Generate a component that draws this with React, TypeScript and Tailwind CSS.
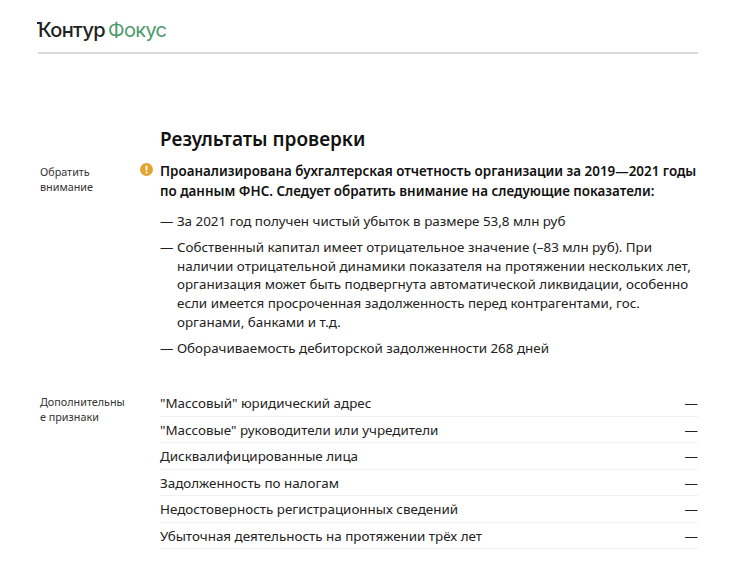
import React from 'react'

const signs = [
  '"Массовый" юридический адрес',
  '"Массовые" руководители или учредители',
  'Дисквалифицированные лица',
  'Задолженность по налогам',
  'Недостоверность регистрационных сведений',
  'Убыточная деятельность на протяжении трёх лет',
]

const notes = [
  'За 2021 год получен чистый убыток в размере 53,8 млн руб',
  'Собственный капитал имеет отрицательное значение (–83 млн руб). При наличии отрицательной динамики показателя на протяжении нескольких лет, организация может быть подвергнута автоматической ликвидации, особенно если имеется просроченная задолженность перед контрагентами, гос. органами, банками и т.д.',
  'Оборачиваемость дебиторской задолженности 268 дней',
]

export default function App() {
  return (
    <div className="w-[742px] h-[568px] overflow-hidden bg-white text-[#222] font-['Noto_Sans',sans-serif]">
      <div className="ml-[38px] w-[660px]">
        <header className="h-[54px] border-b-2 border-[#d9d9d9] pt-[18px] flex items-start text-[20px] leading-[24px] font-['Inter',sans-serif] tracking-[-0.65px]">
          <span className="relative font-medium text-[#222]">
            <span className="absolute left-[-1px] top-[4px] w-[3px] h-[2px] bg-[#222]" />
            Контур
          </span>
          <span className="ml-[3px] text-[#4d9a6c]">Фокус</span>
        </header>

        <h1 className="ml-[122px] mt-[71px] text-[19px] leading-[28px] font-semibold text-[#111]">Результаты проверки</h1>

        <section className="mt-[8px] flex">
          <div className="w-[122px] pl-[2px] text-[10.8px] leading-[15px] pt-[3px] text-[#333]">
            <div className="w-[90px]">Обратить внимание</div>
          </div>
          <div className="flex-1 relative">
            <svg className="absolute left-[-20px] top-[2px]" width="13" height="13" viewBox="0 0 13 13">
              <circle cx="6.5" cy="6.5" r="6.5" fill="#e3a52f" />
              <rect x="5.6" y="2.6" width="1.8" height="5" rx="0.9" fill="#fff" />
              <circle cx="6.5" cy="9.5" r="1" fill="#fff" />
            </svg>
            <p className="text-[13.42px] leading-[20px] font-semibold text-[#111]">
              Проанализирована бухгалтерская отчетность организации за 2019—2021 годы по данным ФНС. Следует обратить внимание на следующие показатели:
            </p>
            <ul className="mt-[11px] flex flex-col gap-[7px] text-[13.4px] leading-[18.75px]">
              {notes.map((n) => (
                <li key={n} className="pl-[17px] -indent-[17px]">— {n}</li>
              ))}
            </ul>
          </div>
        </section>

        <section className="mt-[33px] flex">
          <div className="w-[122px] pl-[2px] pt-[4px] text-[10.8px] leading-[15px] text-[#333]">
            <div className="w-[86px] break-all">Дополнительные признаки</div>
          </div>
          <div className="flex-1">
            {signs.map((s) => (
              <div key={s} className="h-[26.5px] pt-[3px] flex justify-between border-b border-[#f0f0f0] text-[13.4px] leading-[20px]">
                <span>{s}</span>
                <span>—</span>
              </div>
            ))}
          </div>
        </section>
      </div>
    </div>
  )
}
